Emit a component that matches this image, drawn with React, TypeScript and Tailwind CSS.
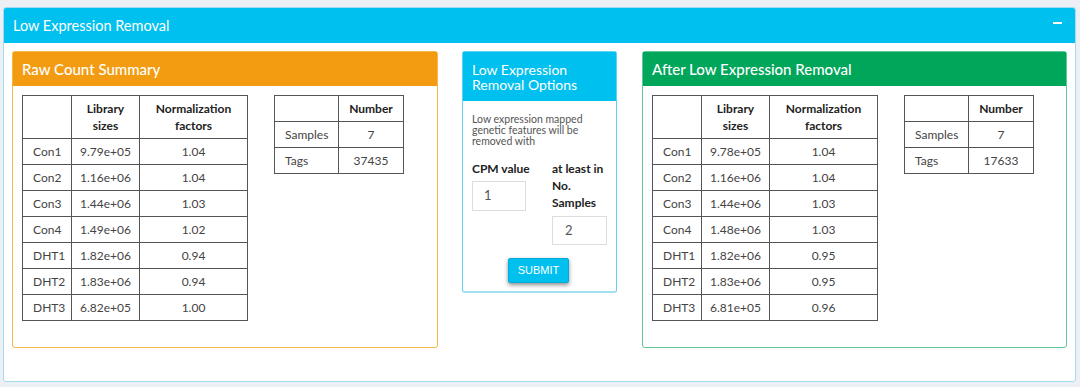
import React from 'react';

type Row = [string, string, string];

const rawRows: Row[] = [
  ['Con1', '9.79e+05', '1.04'],
  ['Con2', '1.16e+06', '1.04'],
  ['Con3', '1.44e+06', '1.03'],
  ['Con4', '1.49e+06', '1.02'],
  ['DHT1', '1.82e+06', '0.94'],
  ['DHT2', '1.83e+06', '0.94'],
  ['DHT3', '6.82e+05', '1.00'],
];

const afterRows: Row[] = [
  ['Con1', '9.78e+05', '1.04'],
  ['Con2', '1.16e+06', '1.04'],
  ['Con3', '1.44e+06', '1.03'],
  ['Con4', '1.48e+06', '1.03'],
  ['DHT1', '1.82e+06', '0.95'],
  ['DHT2', '1.83e+06', '0.95'],
  ['DHT3', '6.81e+05', '0.96'],
];

const td = 'border border-[#555] text-center text-[12px] text-[#444] h-[26px] p-0';
const first = 'border border-[#555] text-left pl-[10px] text-[12px] text-[#444] h-[26px] p-0';
const th = 'border border-[#555] text-center text-[12px] font-bold text-[#222] leading-[17px] p-0';

function SizeTable({ rows }: { rows: Row[] }) {
  return (
    <table className="border-collapse table-fixed w-[225px]">
      <colgroup>
        <col className="w-[49px]" />
        <col className="w-[68px]" />
        <col className="w-[108px]" />
      </colgroup>
      <thead>
        <tr className="h-[43px]">
          <th className={th}></th>
          <th className={th}>Library<br />sizes</th>
          <th className={th}>Normalization<br />factors</th>
        </tr>
      </thead>
      <tbody>
        {rows.map((r) => (
          <tr key={r[0]}>
            <td className={first}>{r[0]}</td>
            <td className={td}>{r[1]}</td>
            <td className={td}>{r[2]}</td>
          </tr>
        ))}
      </tbody>
    </table>
  );
}

function CountTable({ tags }: { tags: string }) {
  return (
    <table className="border-collapse table-fixed w-[129px] self-start">
      <colgroup>
        <col className="w-[64px]" />
        <col className="w-[65px]" />
      </colgroup>
      <thead>
        <tr className="h-[26px]">
          <th className={th}></th>
          <th className={th}>Number</th>
        </tr>
      </thead>
      <tbody>
        <tr>
          <td className={first}>Samples</td>
          <td className={td}>7</td>
        </tr>
        <tr>
          <td className={first}>Tags</td>
          <td className={td}>{tags}</td>
        </tr>
      </tbody>
    </table>
  );
}

function SummaryBox({ title, rows, tags, head, edge, width }: { title: string; rows: Row[]; tags: string; head: string; edge: string; width: string }) {
  return (
    <div className={`${width} h-[297px] rounded-[3px] border ${edge} bg-white`}>
      <div className={`${head} h-[34px] flex items-center px-[9px] text-white text-[15px] font-medium`}>{title}</div>
      <div className="flex gap-[26px] px-[9px] pt-[9px]">
        <SizeTable rows={rows} />
        <CountTable tags={tags} />
      </div>
    </div>
  );
}

export default function App() {
  return (
    <div className="w-[1080px] h-[387px] bg-[#ecf0f5] pt-[7px] pl-[3px]" style={{ fontFamily: 'Lato, "Open Sans", sans-serif' }}>
      <div className="w-[1073px] h-[375px] bg-white border border-[#a3dcf1] rounded-[3px] overflow-hidden">
        <div className="h-[35px] bg-[#00c0ef] flex items-center justify-between pl-[9px] pr-[13px]">
          <span className="text-white text-[14.5px]">Low Expression Removal</span>
          <span className="block w-[9px] h-[2px] bg-white mt-[-6px]"></span>
        </div>
        <div className="flex pl-[8px] pt-[8px]">
          <SummaryBox title="Raw Count Summary" rows={rawRows} tags="37435" head="bg-[#f39c12]" edge="border-[#f7b64a]" width="w-[426px]" />

          <div className="ml-[24px] w-[155px] h-[242px] rounded-[3px] border border-[#5fd2f1] border-b-2 border-b-[#9fe0f3] bg-white">
            <div className="bg-[#00c0ef] h-[49px] px-[9px] pt-[10px] text-white text-[14px] leading-[15px]">
              Low Expression<br />Removal Options
            </div>
            <div className="px-[9px] pt-[13px]">
              <p className="text-[10.5px] leading-[11px] text-[#555]">
                Low expression mapped<br />genetic features will be<br />removed with
              </p>
              <div className="flex mt-[13px]">
                <div className="w-[80px]">
                  <div className="text-[12px] font-bold leading-[17px] text-[#222]">CPM value</div>
                  <div className="mt-[4px] w-[54px] h-[30px] border border-[#ddd] text-[13px] text-[#555] pl-[11px] flex items-center">1</div>
                </div>
                <div>
                  <div className="text-[12px] font-bold leading-[17px] text-[#222] whitespace-nowrap">at least in<br />No.<br />Samples</div>
                  <div className="mt-[5px] w-[55px] h-[29px] border border-[#ddd] text-[13px] text-[#555] pl-[12px] flex items-center">2</div>
                </div>
              </div>
              <div className="flex justify-center mt-[13px] pr-[2px]">
                <button className="w-[61px] h-[25px] bg-[#00c0ef] border border-[#00acd6] rounded-[2px] text-white text-[11px] shadow-[0_2px_4px_rgba(0,0,0,0.45)]" style={{ fontFamily: '"Liberation Sans", Arial, sans-serif' }}>
                  SUBMIT
                </button>
              </div>
            </div>
          </div>

          <div className="ml-[25px]">
            <SummaryBox title="After Low Expression Removal" rows={afterRows} tags="17633" head="bg-[#00a65a]" edge="border-[#5ec994]" width="w-[425px]" />
          </div>
        </div>
      </div>
    </div>
  );
}
